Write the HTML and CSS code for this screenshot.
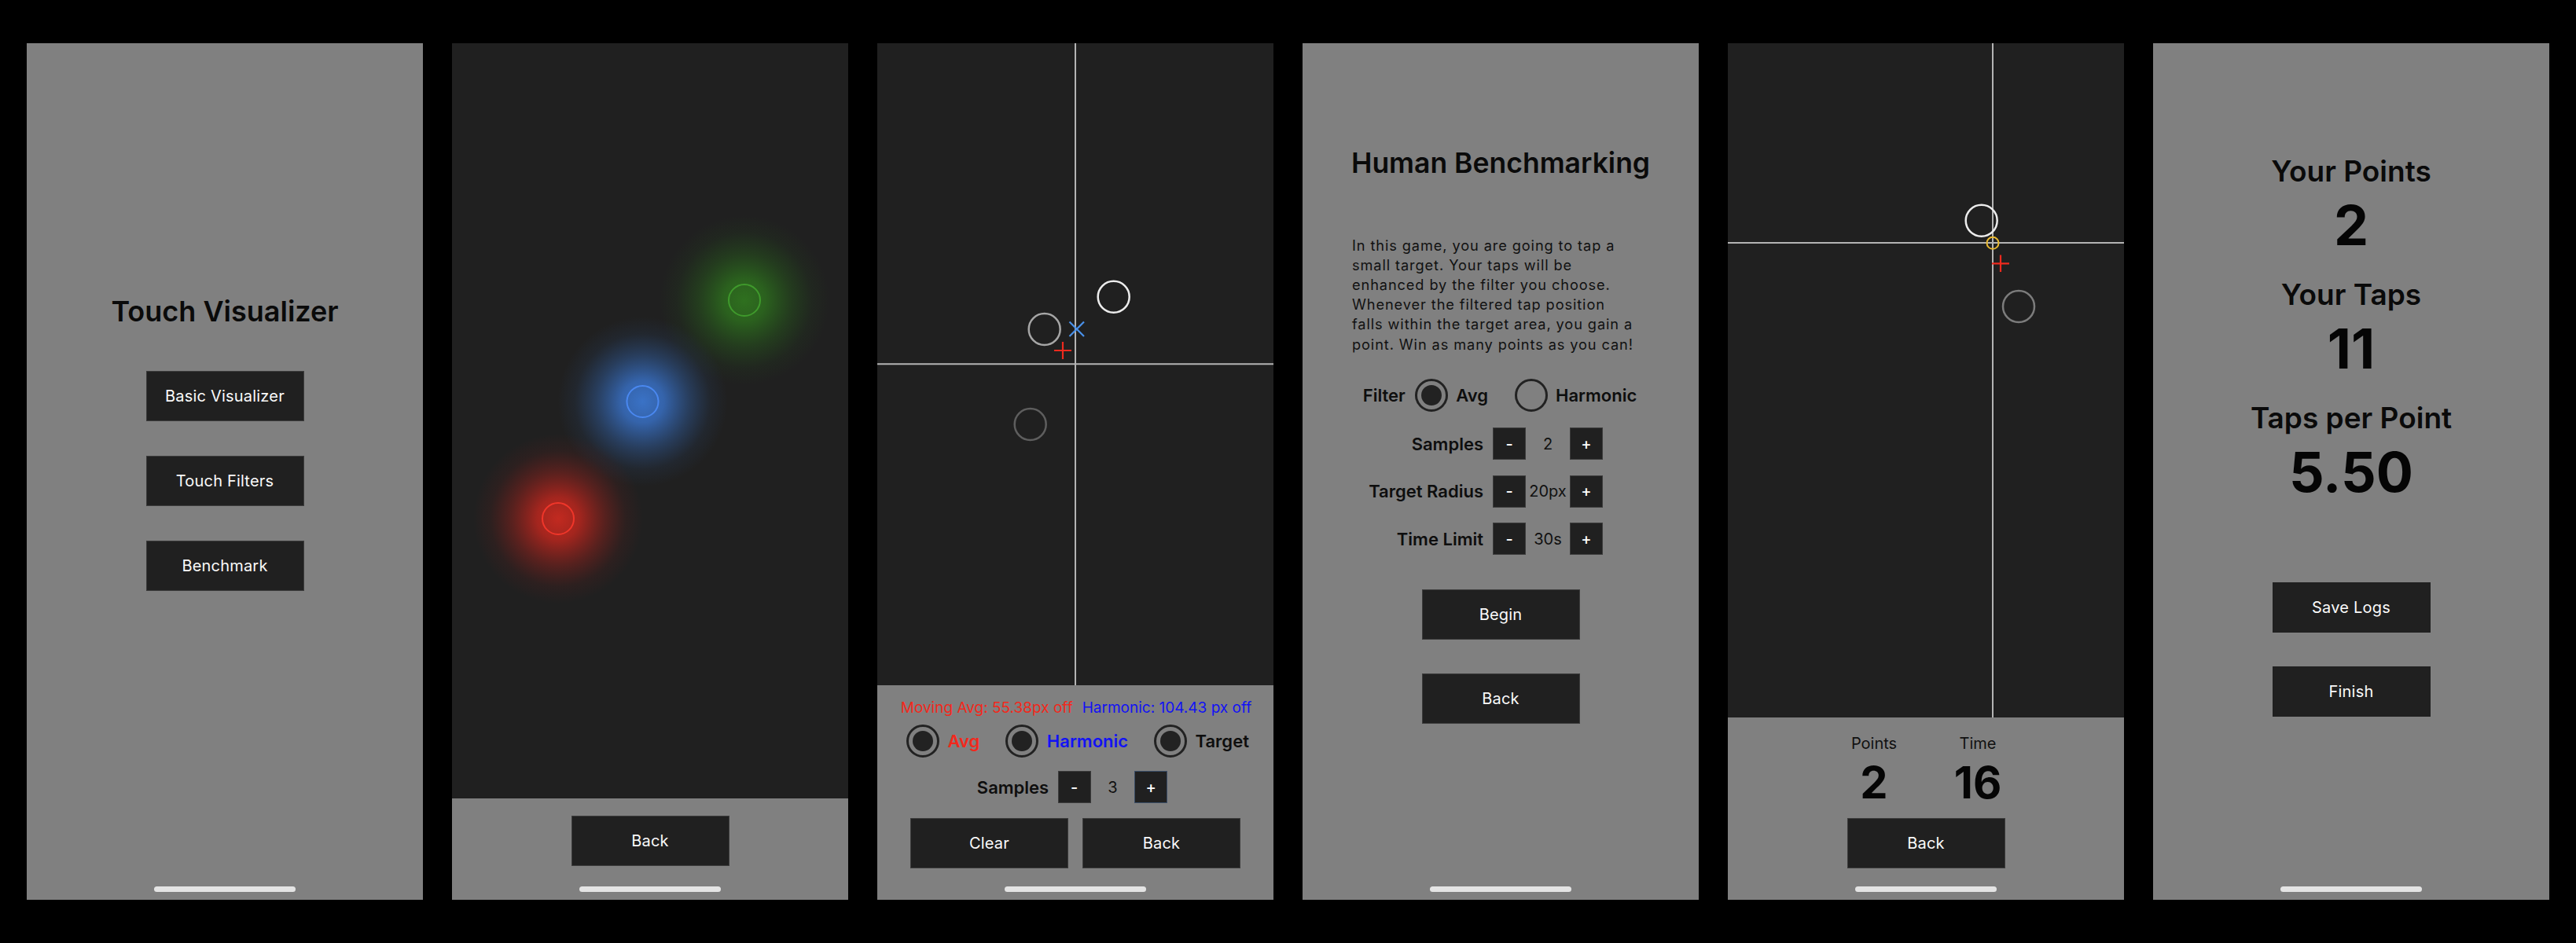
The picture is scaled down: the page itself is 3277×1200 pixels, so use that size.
FILE: index.html
```html
<!DOCTYPE html>
<html lang="en">
<head>
<meta charset="utf-8">
<title>Touch Visualizer screens</title>
<link rel="stylesheet" href="styles.css">
</head>
<body>
<main class="screens">

  <!-- 1: menu -->
  <section class="phone menu">
    <h1 class="title">Touch Visualizer</h1>
    <div class="btn-stack">
      <button class="btn">Basic Visualizer</button>
      <button class="btn">Touch Filters</button>
      <button class="btn">Benchmark</button>
    </div>
    <div class="home-bar"></div>
  </section>

  <!-- 2: basic visualizer -->
  <section class="phone split">
    <div class="canvas canvas-basic">
      <svg class="field" width="504" height="961" viewBox="0 0 504 961">
        <defs>
          <radialGradient id="glowG">
            <stop offset="0" stop-color="#2f701f" stop-opacity="1"/>
            <stop offset="0.25" stop-color="#2c681e" stop-opacity="0.9"/>
            <stop offset="0.55" stop-color="#285e1c" stop-opacity="0.45"/>
            <stop offset="0.8" stop-color="#255a1b" stop-opacity="0.12"/>
            <stop offset="1" stop-color="#255a1b" stop-opacity="0"/>
          </radialGradient>
          <radialGradient id="glowB">
            <stop offset="0" stop-color="#3a72c6" stop-opacity="1"/>
            <stop offset="0.25" stop-color="#376bba" stop-opacity="0.9"/>
            <stop offset="0.55" stop-color="#3262a8" stop-opacity="0.45"/>
            <stop offset="0.8" stop-color="#2e5a9a" stop-opacity="0.12"/>
            <stop offset="1" stop-color="#2e5a9a" stop-opacity="0"/>
          </radialGradient>
          <radialGradient id="glowR">
            <stop offset="0" stop-color="#c22a20" stop-opacity="1"/>
            <stop offset="0.25" stop-color="#b2261e" stop-opacity="0.9"/>
            <stop offset="0.55" stop-color="#9c221c" stop-opacity="0.45"/>
            <stop offset="0.8" stop-color="#8a1e1a" stop-opacity="0.12"/>
            <stop offset="1" stop-color="#8a1e1a" stop-opacity="0"/>
          </radialGradient>
        </defs>
        <circle cx="372" cy="327" r="108" fill="url(#glowG)"/>
        <circle cx="372" cy="327" r="20" fill="none" stroke="#3f9a2c" stroke-width="2"/>
        <circle cx="242.5" cy="456" r="108" fill="url(#glowB)"/>
        <circle cx="242.5" cy="456" r="20" fill="none" stroke="#4a88f0" stroke-width="2"/>
        <circle cx="135" cy="605" r="108" fill="url(#glowR)"/>
        <circle cx="135" cy="605" r="20" fill="none" stroke="#f0362a" stroke-width="2"/>
      </svg>
    </div>
    <div class="tray tray-basic">
      <button class="btn">Back</button>
    </div>
    <div class="home-bar"></div>
  </section>

  <!-- 3: touch filters -->
  <section class="phone split">
    <div class="canvas canvas-filters">
      <svg class="field" width="504" height="817" viewBox="0 0 504 817">
        <line x1="252" y1="0" x2="252" y2="817" stroke="#b4b4b4" stroke-width="2"/>
        <line x1="0" y1="408.3" x2="504" y2="408.3" stroke="#b4b4b4" stroke-width="2"/>
        <circle cx="300.7" cy="322.7" r="20" fill="none" stroke="#ececec" stroke-width="2.5"/>
        <circle cx="212.7" cy="364" r="20" fill="none" stroke="#a6a6a6" stroke-width="2.5"/>
        <circle cx="194.7" cy="485" r="20" fill="none" stroke="#5e5e5e" stroke-width="2.5"/>
        <path d="M244.5 354.5 L263 373 M244.5 373 L263 354.5" stroke="#4a92ec" stroke-width="2.2" fill="none"/>
        <path d="M225 391 L247 391 M236 380 L236 402" stroke="#ee2a1e" stroke-width="2.2" fill="none"/>
      </svg>
    </div>
    <div class="tray tray-filters">
      <div class="readout">
        <span class="red">Moving Avg: 55.38px off</span>
        <span class="blue">Harmonic: 104.43 px off</span>
      </div>
      <div class="radio-row">
        <label class="opt"><span class="radio on"></span><span class="opt-label red">Avg</span></label>
        <label class="opt"><span class="radio on"></span><span class="opt-label blue">Harmonic</span></label>
        <label class="opt"><span class="radio on"></span><span class="opt-label">Target</span></label>
      </div>
      <div class="stepper-row">
        <span class="field-label">Samples</span>
        <button class="step">-</button>
        <span class="step-value">3</span>
        <button class="step step-focus">+</button>
      </div>
      <div class="btn-pair">
        <button class="btn">Clear</button>
        <button class="btn">Back</button>
      </div>
    </div>
    <div class="home-bar"></div>
  </section>

  <!-- 4: benchmark setup -->
  <section class="phone bench">
    <h1 class="title">Human Benchmarking</h1>
    <p class="intro">In this game, you are going to tap a<br>small target. Your taps will be<br>enhanced by the filter you choose.<br>Whenever the filtered tap position<br>falls within the target area, you gain a<br>point. Win as many points as you can!</p>
    <div class="filter-row">
      <span class="field-label filter-label">Filter</span>
      <div class="radio-group">
        <label class="opt"><span class="radio on"></span><span class="opt-label">Avg</span></label>
        <label class="opt"><span class="radio"></span><span class="opt-label">Harmonic</span></label>
      </div>
    </div>
    <div class="settings">
      <span class="field-label set-label">Samples</span>
      <button class="step">-</button>
      <span class="step-value">2</span>
      <button class="step">+</button>

      <span class="field-label set-label">Target Radius</span>
      <button class="step">-</button>
      <span class="step-value">20px</span>
      <button class="step">+</button>

      <span class="field-label set-label">Time Limit</span>
      <button class="step">-</button>
      <span class="step-value">30s</span>
      <button class="step">+</button>
    </div>
    <div class="btn-stack bench-buttons">
      <button class="btn">Begin</button>
      <button class="btn">Back</button>
    </div>
    <div class="home-bar"></div>
  </section>

  <!-- 5: game -->
  <section class="phone split">
    <div class="canvas canvas-game">
      <svg class="field" width="504" height="858" viewBox="0 0 504 858">
        <line x1="337" y1="0" x2="337" y2="858" stroke="#b4b4b4" stroke-width="2"/>
        <line x1="0" y1="254" x2="504" y2="254" stroke="#b4b4b4" stroke-width="2"/>
        <circle cx="322.7" cy="225.7" r="20" fill="none" stroke="#ececec" stroke-width="2.5"/>
        <circle cx="337" cy="254.3" r="7.5" fill="none" stroke="#e8b830" stroke-width="2"/>
        <path d="M336 280.3 L358 280.3 M347 269.5 L347 291" stroke="#ee2a1e" stroke-width="2.2" fill="none"/>
        <circle cx="370" cy="335" r="20" fill="none" stroke="#7c7c7c" stroke-width="2.5"/>
      </svg>
    </div>
    <div class="tray tray-game">
      <div class="stats">
        <div class="stat">
          <div class="stat-label">Points</div>
          <div class="stat-value">2</div>
        </div>
        <div class="stat">
          <div class="stat-label">Time</div>
          <div class="stat-value">16</div>
        </div>
      </div>
      <button class="btn">Back</button>
    </div>
    <div class="home-bar"></div>
  </section>

  <!-- 6: results -->
  <section class="phone results">
    <h2 class="res-label">Your Points</h2>
    <div class="res-value">2</div>
    <h2 class="res-label">Your Taps</h2>
    <div class="res-value">11</div>
    <h2 class="res-label">Taps per Point</h2>
    <div class="res-value">5.50</div>
    <div class="btn-stack res-buttons">
      <button class="btn btn-plain">Save Logs</button>
      <button class="btn btn-plain">Finish</button>
    </div>
    <div class="home-bar"></div>
  </section>

</main>
</body>
</html>
```

FILE: styles.css
```css
* {
  box-sizing: border-box;
}

html, body {
  margin: 0;
  padding: 0;
  background: #000;
}

body {
  font-family: Inter, "Noto Sans", "Liberation Sans", sans-serif;
  color: #0e0e0e;
}

.screens {
  display: flex;
  gap: 37px;
  padding: 55px 34px;
  width: 3277px;
  height: 1200px;
}

.phone {
  position: relative;
  flex: 0 0 504px;
  width: 504px;
  height: 1090px;
  background: #808080;
  overflow: hidden;
}

.home-bar {
  position: absolute;
  left: 162px;
  bottom: 10px;
  width: 180px;
  height: 7px;
  border-radius: 4px;
  background: #e4e4e4;
}

/* ---------- common controls ---------- */
.btn {
  width: 201px;
  height: 64px;
  margin: 0;
  padding: 0;
  background: #202020;
  border: 1px solid #3c3c3c;
  color: #fafafa;
  font-family: Inter, "Noto Sans", sans-serif;
  font-size: 20px;
  font-weight: 400;
  letter-spacing: 0.2px;
}

.btn-plain {
  border-color: #202020;
}

.btn-stack {
  display: flex;
  flex-direction: column;
  align-items: center;
  gap: 44px;
}

.title {
  margin: 0;
  font-size: 36px;
  line-height: 44px;
  font-weight: 600;
  color: #0a0a0a;
}

.field-label {
  font-size: 22px;
  font-weight: 600;
  color: #0e0e0e;
}

.radio {
  width: 42px;
  height: 42px;
  border-radius: 50%;
  border: 3.5px solid #222;
  display: flex;
  align-items: center;
  justify-content: center;
  flex: 0 0 42px;
}

.radio.on::after {
  content: "";
  width: 26px;
  height: 26px;
  border-radius: 50%;
  background: #222;
}

.opt {
  display: flex;
  align-items: center;
  gap: 10.5px;
}

.opt-label {
  font-size: 22px;
  font-weight: 600;
  color: #0e0e0e;
}

.red { color: #f2281c !important; }
.blue { color: #1212f4 !important; }

.step {
  width: 42px;
  height: 41px;
  margin: 0;
  padding: 0;
  background: #202020;
  border: 1px solid #3c3c3c;
  color: #fff;
  font-family: Inter, "Noto Sans", sans-serif;
  font-size: 20px;
  font-weight: 500;
}

.step-focus {
  border-color: #3a4d66;
}

.step-value {
  font-size: 20px;
  font-weight: 400;
  color: #111;
  text-align: center;
}

/* ---------- screen 1 ---------- */
.menu {
  display: flex;
  flex-direction: column;
  align-items: center;
  padding-top: 319px;
}

.menu .title {
  margin-bottom: 54px;
}

/* ---------- split screens ---------- */
.split {
  display: flex;
  flex-direction: column;
}

.canvas {
  background: #202020;
  flex: 0 0 auto;
}

.field {
  display: block;
}

.canvas-basic { height: 961px; }
.canvas-filters { height: 817px; }
.canvas-game { height: 858px; }

.tray {
  flex: 1;
  display: flex;
  flex-direction: column;
  align-items: center;
}

.tray-basic {
  padding-top: 22px;
}

/* ---------- screen 3 ---------- */
.tray-filters {
  padding-top: 16.5px;
}

.readout {
  display: flex;
  justify-content: center;
  gap: 12px;
  font-size: 19px;
  line-height: 24px;
  font-weight: 400;
  padding-left: 2px;
}

.radio-row {
  display: flex;
  justify-content: center;
  gap: 33px;
  margin-top: 9px;
  padding-left: 6px;
}

.stepper-row {
  display: flex;
  align-items: center;
  margin-top: 17.5px;
  margin-right: 8px;
}

.stepper-row .field-label {
  margin-right: 11.5px;
}

.stepper-row .step-value {
  width: 55.5px;
}

.btn-pair {
  display: flex;
  gap: 18px;
  margin-top: 19px;
}

/* ---------- screen 4 ---------- */
.bench {
  display: flex;
  flex-direction: column;
  align-items: center;
  padding-top: 131px;
}

.bench .title {
  font-size: 35.5px;
}

.intro {
  width: 378px;
  margin: 69.5px 0 0;
  font-size: 18.2px;
  line-height: 25.2px;
  font-weight: 400;
  color: #111;
  white-space: nowrap;
  letter-spacing: 0.9px;
}

.filter-row {
  display: flex;
  align-items: center;
  margin-top: 31.7px;
  margin-left: -2px;
}

.filter-label {
  margin-right: 12px;
}

.radio-group {
  display: flex;
  gap: 33.4px;
}

.settings {
  align-self: stretch;
  display: grid;
  grid-template-columns: 242px 42px 56px 42px;
  row-gap: 19.5px;
  align-items: center;
  margin-top: 19.7px;
}

.set-label {
  justify-self: end;
  padding-right: 12px;
}

.bench-buttons {
  margin-top: 44px;
  gap: 43px;
}

/* ---------- screen 5 ---------- */
.tray-game {
  padding-top: 21px;
}

.stats {
  display: flex;
  gap: 32px;
}

.stat {
  width: 100px;
  text-align: center;
}

.stat-label {
  font-size: 20px;
  line-height: 24px;
  font-weight: 400;
  color: #111;
}

.stat-value {
  margin-top: 9px;
  font-size: 56px;
  line-height: 58px;
  font-weight: 700;
  color: #050505;
}

.tray-game .btn {
  margin-top: 15.5px;
}

/* ---------- screen 6 ---------- */
.results {
  display: flex;
  flex-direction: column;
  align-items: center;
  padding-top: 140px;
}

.res-label {
  margin: 0;
  font-size: 37px;
  line-height: 46px;
  font-weight: 600;
  color: #0a0a0a;
}

.res-value {
  font-size: 70px;
  line-height: 92px;
  font-weight: 700;
  color: #050505;
  margin-bottom: 19px;
}

.res-value:last-of-type {
  margin-bottom: 0;
}

.res-buttons {
  margin-top: 75px;
  gap: 43px;
}
```
